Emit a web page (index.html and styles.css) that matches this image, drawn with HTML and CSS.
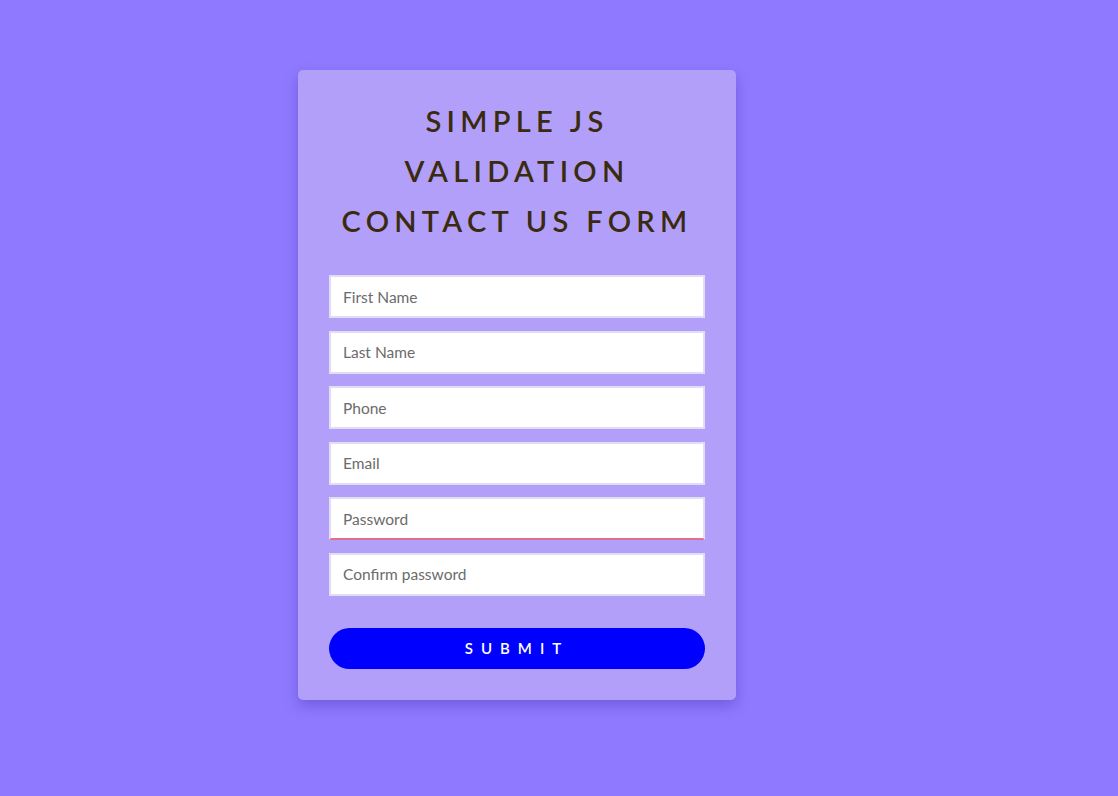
FILE: index.html
```html
<!DOCTYPE html>
<html lang="en">
  <head>
    <meta charset="UTF-8" />
    <meta name="viewport" content="width=device-width, initial-scale=1.0" />
    <title>Simple JS Validation</title>
    <link rel="stylesheet" href="styles.css">
  </head>
  <body>
    <div class="wrapper">
      <form class="form-box" id="contactForm" novalidate>
        <h1>Simple JS Validation Contact Us Form</h1>

        <input type="text" id="firstName" placeholder="First Name" />
        <input type="text" id="lastName" placeholder="Last Name" />
        <input type="text" id="phone" placeholder="Phone" />
        <input type="email" id="email" placeholder="Email" />
        <input type="password" id="password" class="invalid" placeholder="Password" />
        <input type="password" id="confirm" placeholder="Confirm password" />

        <button type="submit" class="btn">Submit</button>
      </form>
    </div>
  </body>
</html>
```

FILE: styles.css
```css
/* Contact form styles */
* {
  box-sizing: border-box;
}

body {
  margin: 0;
  padding: 0;
  min-height: 100vh;
  background: #8f7aff;
  font-family: "Lato", "Open Sans", sans-serif;
}

.wrapper {
  padding: 70px 0 0 298px;
}

.form-box {
  width: 438px;
  background: #b19ffa;
  border-radius: 5px;
  padding: 26px 31px 31px;
  box-shadow: 0 6px 14px rgba(60, 40, 160, 0.35);
  display: flex;
  flex-direction: column;
}

.form-box h1 {
  margin: 0 0 29px;
  text-align: center;
  text-transform: uppercase;
  font-size: 29px;
  font-weight: 600;
  letter-spacing: 5.3px;
  line-height: 50px;
  color: #3a2a0e;
}

.form-box input {
  width: 100%;
  height: 43px;
  margin-bottom: 12.6px;
  padding: 0 12px;
  border: 2px solid #e2ddf3;
  background: #fff;
  font-family: inherit;
  font-size: 15.5px;
  color: #333;
  outline: none;
}

.form-box input::placeholder {
  color: #6b6b6b;
}

.form-box input.invalid {
  border-bottom-color: #e0708a;
}

.btn {
  margin-top: 19px;
  height: 41px;
  border: none;
  border-radius: 21px;
  background: #0000ff;
  color: #fff;
  font-family: inherit;
  font-size: 15px;
  font-weight: 600;
  letter-spacing: 8px;
  text-transform: uppercase;
  cursor: pointer;
}
```
